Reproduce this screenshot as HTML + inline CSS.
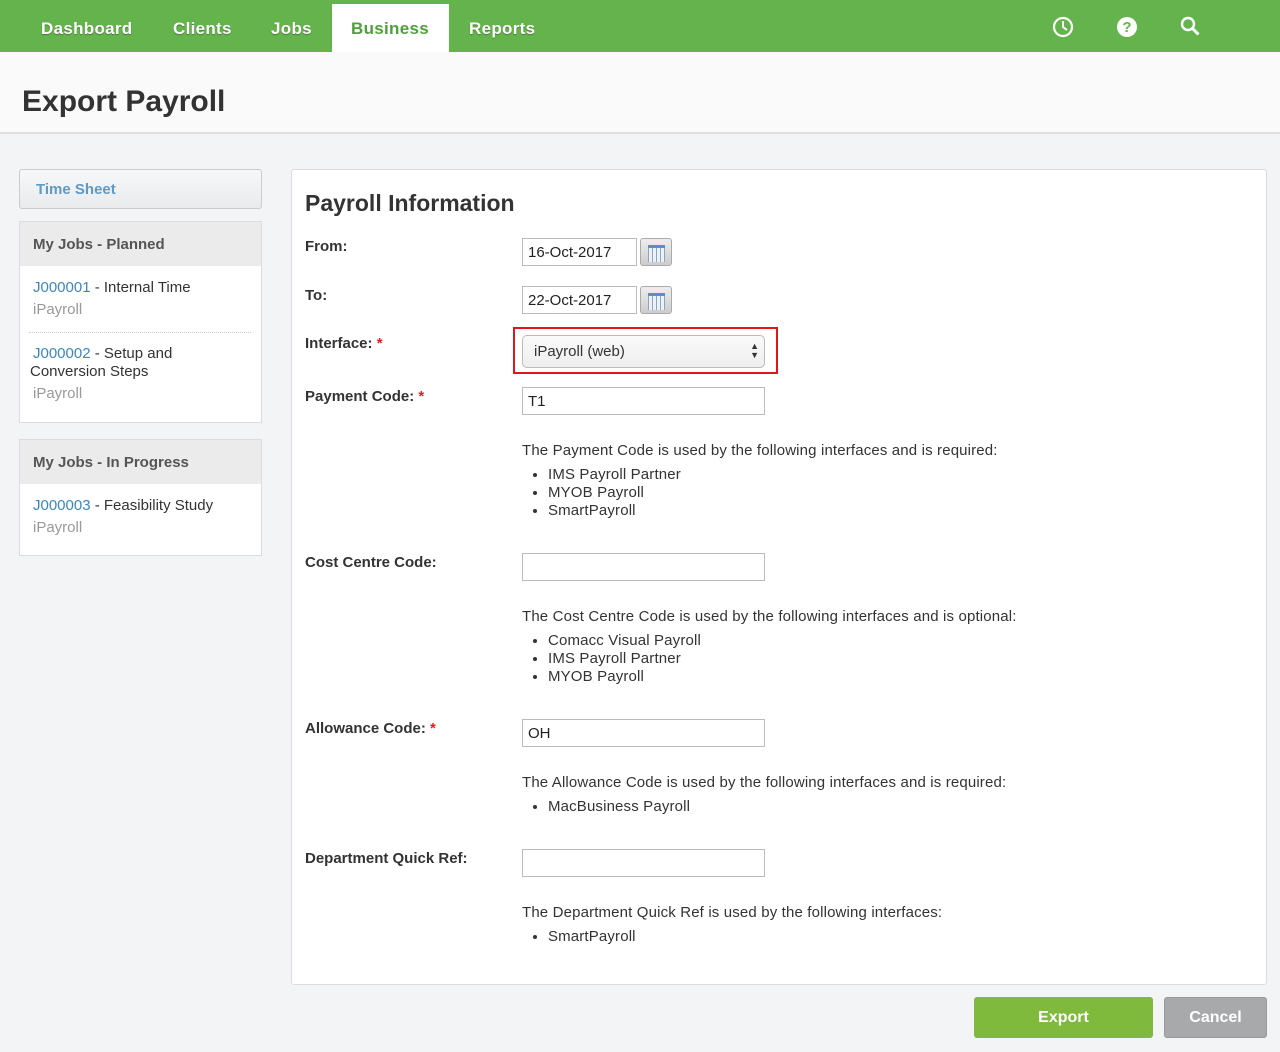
<!DOCTYPE html>
<html><head><style>
*{box-sizing:border-box}
body{margin:0;width:1280px;height:1052px;background:#f3f4f6;font-family:"Liberation Sans",sans-serif;position:relative;overflow:hidden;color:#333}
.a{position:absolute}
.nav{left:0;top:0;width:1280px;height:52px;background:#64b34c}
.nav span{position:absolute;top:19px;font-size:17px;font-weight:bold;color:#fff;text-shadow:0 1px 1px rgba(0,0,0,.3);letter-spacing:.3px}
.hdr{left:0;top:52px;width:1280px;height:82px;background:#fafafa;border-bottom:2px solid #dedede}
.box{background:#fff;border:1px solid #dcdcdc}
.lbl{left:305px;font-size:15px;font-weight:bold;color:#333}
.req{color:#d22}
.inp{left:522px;width:243px;height:28px;border:1px solid #bbb;background:#fff;font-size:15px;padding:5px 5px;color:#222}
.txt{left:522px;font-size:15px;color:#333;line-height:18px;letter-spacing:.15px}
.txt ul{margin:6px 0 0;padding-left:26px}
.side .j{font-size:15px;color:#333;line-height:18px}
.blue{color:#3a87c0}
.grey{color:#999}
.cal{width:32px;height:28px;border:1px solid #aaa;border-radius:3px;background:linear-gradient(#eee,#ccc)}
.cal:after{content:"";position:absolute;left:7px;top:6px;width:17px;height:14px;background:repeating-linear-gradient(90deg,#8aa 0 1px,#eef 1px 4px);border-top:3px solid #5a8fc9}
</style></head><body>
<div class="a nav">
<div class="a" style="left:332px;top:4px;width:117px;height:48px;background:#fff"></div>
<span style="left:41px">Dashboard</span><span style="left:173px">Clients</span><span style="left:271px">Jobs</span>
<span style="left:351px;color:#4ea03a;text-shadow:none">Business</span><span style="left:469px">Reports</span>
<svg class="a" style="left:1052px;top:16px" width="24" height="22" viewBox="0 0 24 22"><circle cx="11" cy="11" r="9" fill="none" stroke="#fff" stroke-width="2.2"/><path d="M11 5v6l4 3" fill="none" stroke="#fff" stroke-width="2"/></svg>
<svg class="a" style="left:1116px;top:16px" width="22" height="22" viewBox="0 0 22 22"><circle cx="11" cy="11" r="10" fill="#fff"/><text x="11" y="16" text-anchor="middle" font-size="15" font-weight="bold" fill="#64b34c" font-family="Liberation Sans">?</text></svg>
<svg class="a" style="left:1180px;top:16px" width="22" height="22" viewBox="0 0 22 22"><circle cx="8" cy="8" r="6" fill="none" stroke="#fff" stroke-width="2.4"/><path d="M12.5 12.5l6 6" stroke="#fff" stroke-width="3"/></svg>
</div>
<div class="a hdr"><div class="a" style="left:22px;top:33px;font-size:30px;font-weight:bold;color:#333">Export Payroll</div></div>

<div class="a side" style="left:19px;top:169px;width:243px">
<div class="a" style="left:0;top:0;width:243px;height:40px;border:1px solid #ccc;border-radius:3px;background:linear-gradient(#f7f8f9,#e8eaec)"><div class="a" style="left:16px;top:11px;font-size:15px;font-weight:bold;color:#5e9ac6">Time Sheet</div></div>
<div class="a box" style="left:0;top:52px;width:243px;height:202px">
<div class="a" style="left:0;top:0;width:241px;height:44px;background:#ebebeb"><div class="a" style="left:13px;top:14px;font-size:15px;font-weight:bold;color:#555">My Jobs - Planned</div></div>
<div class="a j" style="left:13px;top:57px"><span class="blue">J000001</span> - Internal Time<br><span class="grey" style="line-height:26px">iPayroll</span></div>
<div class="a" style="left:9px;top:110px;width:222px;border-top:1px dotted #ccc"></div>
<div class="a j" style="left:10px;top:123px"><span class="blue" style="margin-left:3px">J000002</span> - Setup and<br>Conversion Steps<br><span class="grey" style="margin-left:3px;line-height:26px">iPayroll</span></div>
</div>
<div class="a box" style="left:0;top:270px;width:243px;height:117px">
<div class="a" style="left:0;top:0;width:241px;height:44px;background:#ebebeb"><div class="a" style="left:13px;top:14px;font-size:15px;font-weight:bold;color:#555">My Jobs - In Progress</div></div>
<div class="a j" style="left:13px;top:57px"><span class="blue">J000003</span> - Feasibility Study<br><span class="grey" style="line-height:26px">iPayroll</span></div>
</div>
</div>

<div class="a box" style="left:291px;top:169px;width:976px;height:816px;border-radius:3px"></div>
<div class="a" style="left:305px;top:190px;font-size:23px;font-weight:bold;color:#333">Payroll Information</div>
<div class="a lbl" style="top:238px">From:</div>
<div class="a inp" style="top:238px;width:115px">16-Oct-2017</div><div class="a cal" style="left:640px;top:238px"></div>
<div class="a lbl" style="top:287px">To:</div>
<div class="a inp" style="top:286px;width:115px">22-Oct-2017</div><div class="a cal" style="left:640px;top:286px"></div>
<div class="a lbl" style="top:335px">Interface: <span class="req">*</span></div>
<div class="a" style="left:513px;top:327px;width:265px;height:47px;border:2px solid #e3141b"></div>
<div class="a" style="left:522px;top:335px;width:243px;height:33px;border:1px solid #bbb;border-radius:5px;background:linear-gradient(#fafafa,#eee);font-size:15px;padding:7px 11px">iPayroll (web)<span class="a" style="right:5px;top:6px;font-size:9px;line-height:9px">▲<br>▼</span></div>
<div class="a lbl" style="top:388px">Payment Code: <span class="req">*</span></div>
<div class="a inp" style="top:387px">T1</div>
<div class="a txt" style="top:442px">The Payment Code is used by the following interfaces and is required:<ul><li>IMS Payroll Partner</li><li>MYOB Payroll</li><li>SmartPayroll</li></ul></div>
<div class="a lbl" style="top:554px">Cost Centre Code:</div>
<div class="a inp" style="top:553px"></div>
<div class="a txt" style="top:608px">The Cost Centre Code is used by the following interfaces and is optional:<ul><li>Comacc Visual Payroll</li><li>IMS Payroll Partner</li><li>MYOB Payroll</li></ul></div>
<div class="a lbl" style="top:720px">Allowance Code: <span class="req">*</span></div>
<div class="a inp" style="top:719px">OH</div>
<div class="a txt" style="top:774px">The Allowance Code is used by the following interfaces and is required:<ul><li>MacBusiness Payroll</li></ul></div>
<div class="a lbl" style="top:850px">Department Quick Ref:</div>
<div class="a inp" style="top:849px"></div>
<div class="a txt" style="top:904px">The Department Quick Ref is used by the following interfaces:<ul><li>SmartPayroll</li></ul></div>

<div class="a" style="left:974px;top:997px;width:179px;height:41px;background:#7fba3c;border-radius:3px;color:#fff;font-size:16px;font-weight:bold;text-align:center;line-height:41px">Export</div>
<div class="a" style="left:1164px;top:997px;width:103px;height:41px;background:#a7a9aa;border:1px solid #999;border-radius:3px;color:#fff;font-size:16px;font-weight:bold;text-align:center;line-height:39px">Cancel</div>
</body></html>
